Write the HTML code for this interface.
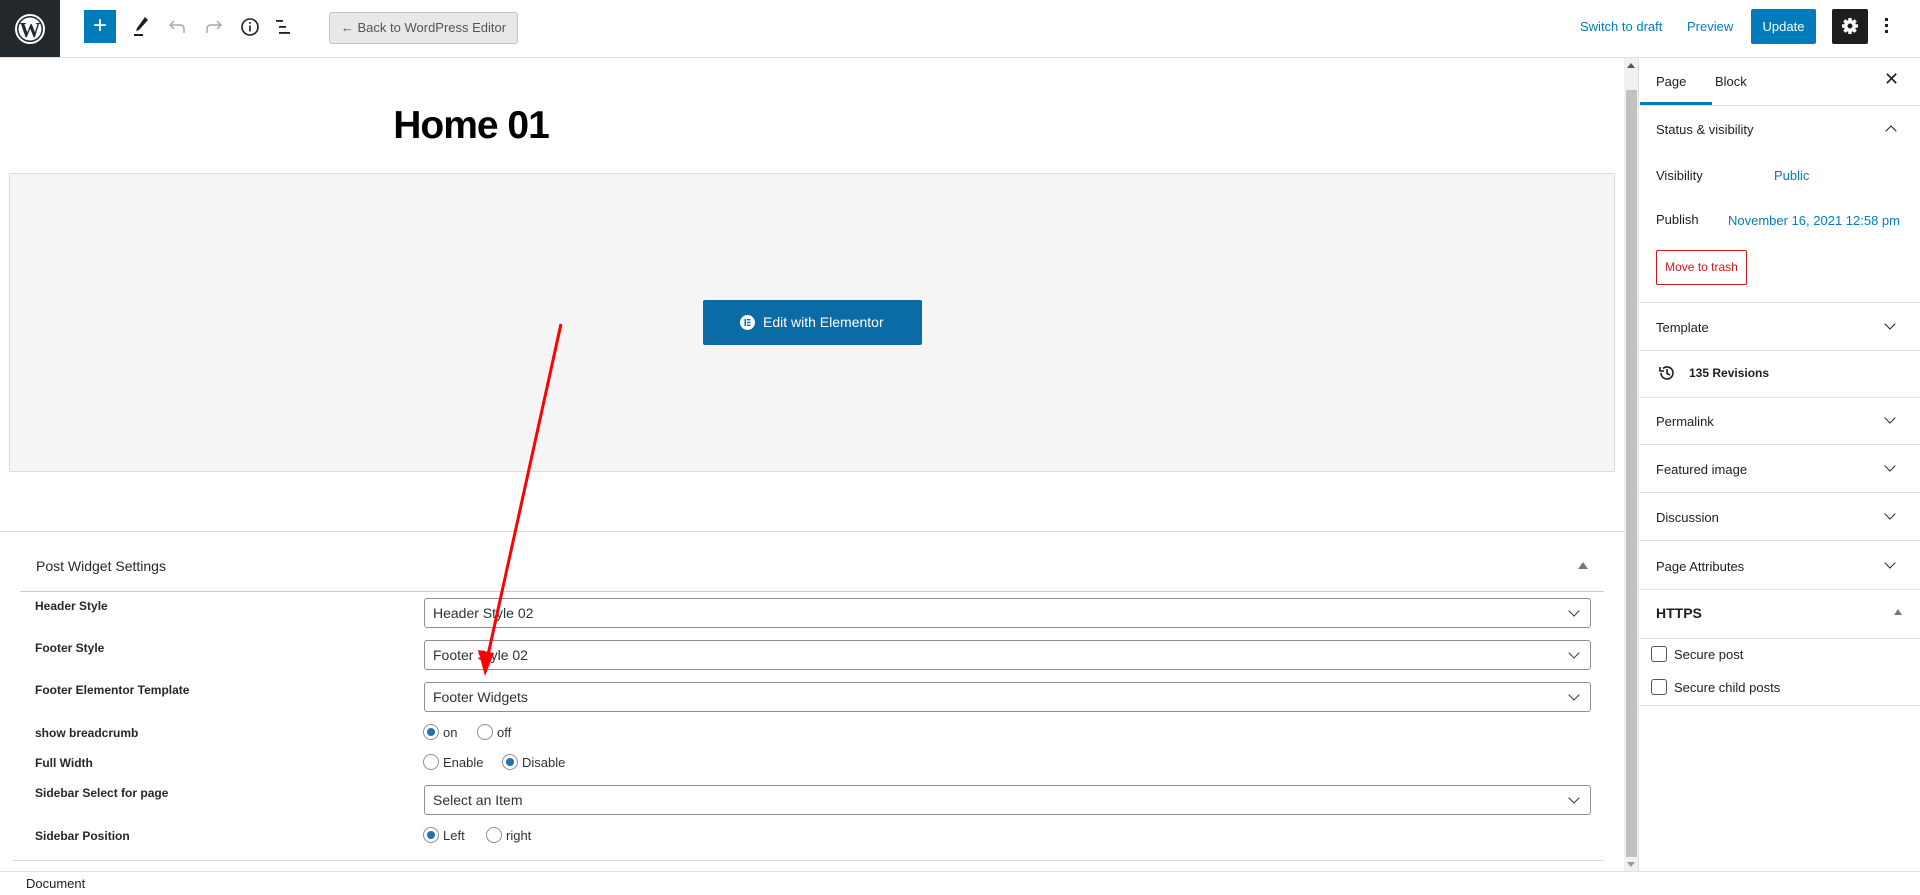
<!DOCTYPE html>
<html><head><meta charset="utf-8"><style>
*{box-sizing:border-box;margin:0;padding:0}
body{width:1920px;height:895px;position:relative;overflow:hidden;background:#fff;font-family:"Liberation Sans",sans-serif;font-size:13px;color:#1e1e1e}
.a{position:absolute}
.t{position:absolute;white-space:nowrap;line-height:16px}
.hl{position:absolute;height:1px;background:#e0e0e0}
.lbl{position:absolute;left:35px;font-weight:bold;font-size:12px;color:#23282d;white-space:nowrap}
.sel{position:absolute;left:424px;width:1167px;height:30px;border:1px solid #8c8f94;border-radius:3px;padding:6px 8px;font-size:14px;color:#2c3338}
.sel:after{content:"";position:absolute;right:12px;top:8px;width:7px;height:7px;border-right:1.5px solid #333;border-bottom:1.5px solid #333;transform:rotate(45deg)}
.rad{position:absolute;width:16px;height:16px;border:1px solid #8c8f94;border-radius:50%}
.rad.on:after{content:"";position:absolute;left:3px;top:3px;width:8px;height:8px;border-radius:50%;background:#2271b1}
.rt{position:absolute;font-size:13px;color:#2c3338}
.side{position:absolute;left:1656px;font-size:13px;color:#1e1e1e}
.chev{position:absolute;left:1886px;width:8px;height:8px;border-right:1.5px solid #1e1e1e;border-bottom:1.5px solid #1e1e1e;transform:rotate(45deg)}
</style></head><body>
<div class="a" style="left:0;top:0;width:60px;height:57px;background:#23282d"></div>
<svg class="a" style="left:14px;top:13px" width="32" height="32" viewBox="0 0 32 32"><circle cx="16" cy="16" r="14" fill="none" stroke="#fff" stroke-width="2"/><circle cx="16" cy="16" r="11.5" fill="#fff"/><text x="16" y="24" text-anchor="middle" font-family="Liberation Serif" font-weight="bold" font-size="21" fill="#23282d">W</text></svg>
<div class="hl" style="left:0;top:57px;width:1920px;background:#e0e0e0"></div>
<div class="a" style="left:84px;top:10px;width:32px;height:33px;background:#007cba;color:#fff;font-size:24px;text-align:center;line-height:31px">+</div>
<svg class="a" style="left:131px;top:14px" width="22" height="24" viewBox="0 0 22 24"><path d="M14 3 L17 6 L8 16 L5 17 L6 14 Z" fill="#1e1e1e"/><rect x="3" y="20" width="9" height="2" fill="#1e1e1e"/></svg>
<svg class="a" style="left:168px;top:17px" width="20" height="20" viewBox="0 0 20 20"><path d="M6 4 L2 8 L6 12 M2 8 H12 Q16 8 16 12 V16" fill="none" stroke="#aaa" stroke-width="1.5"/></svg>
<svg class="a" style="left:203px;top:17px" width="20" height="20" viewBox="0 0 20 20"><path d="M14 4 L18 8 L14 12 M18 8 H8 Q4 8 4 12 V16" fill="none" stroke="#aaa" stroke-width="1.5"/></svg>
<svg class="a" style="left:239px;top:16px" width="22" height="22" viewBox="0 0 22 22"><circle cx="11" cy="11" r="8" fill="none" stroke="#1e1e1e" stroke-width="1.6"/><rect x="10.2" y="9.5" width="1.6" height="6" fill="#1e1e1e"/><rect x="10.2" y="6" width="1.6" height="1.8" fill="#1e1e1e"/></svg>
<svg class="a" style="left:274px;top:17px" width="22" height="20" viewBox="0 0 22 20"><rect x="2" y="3" width="7" height="1.8" fill="#1e1e1e"/><rect x="5" y="9" width="7" height="1.8" fill="#1e1e1e"/><rect x="5" y="15" width="11" height="1.8" fill="#1e1e1e"/></svg>
<div class="a" style="left:329px;top:12px;width:189px;height:32px;background:#e8e8e8;border:1px solid #c4c4c4;border-radius:3px;font-size:13px;color:#555;text-align:center;line-height:30px">← Back to WordPress Editor</div>
<div class="t" style="left:1580px;top:19px;color:#007cba">Switch to draft</div>
<div class="t" style="left:1687px;top:19px;color:#007cba">Preview</div>
<div class="a" style="left:1751px;top:9px;width:65px;height:35px;background:#007cba;color:#fff;border-radius:2px;text-align:center;line-height:35px">Update</div>
<div class="a" style="left:1832px;top:9px;width:36px;height:35px;background:#1e1e1e;border-radius:2px"></div>
<svg class="a" style="left:1840px;top:16px" width="20" height="20" viewBox="0 0 20 20"><g fill="#fff"><circle cx="10" cy="10" r="6"/><rect x="8.3" y="2" width="3.4" height="16"/><rect x="2" y="8.3" width="16" height="3.4"/><rect x="8.3" y="2" width="3.4" height="16" transform="rotate(45 10 10)"/><rect x="8.3" y="2" width="3.4" height="16" transform="rotate(-45 10 10)"/></g><circle cx="10" cy="10" r="2.5" fill="#1e1e1e"/></svg>
<div class="a" style="left:1885px;top:18px;width:3px;height:3px;background:#1e1e1e;box-shadow:0 6px 0 #1e1e1e,0 12px 0 #1e1e1e"></div>

<div class="t" style="left:0;width:942px;text-align:center;top:104px;font-size:39px;line-height:44px;font-weight:bold;color:#000;letter-spacing:-1px">Home 01</div>
<div class="a" style="left:9px;top:173px;width:1606px;height:299px;background:#f5f5f5;border:1px solid #ddd"></div>
<div class="a" style="left:703px;top:300px;width:219px;height:45px;background:#0a6ba6;border-radius:2px;color:#fff;font-size:14px;line-height:45px;padding-left:60px">Edit with Elementor</div>
<svg class="a" style="left:740px;top:315px" width="15" height="15" viewBox="0 0 15 15"><circle cx="7.5" cy="7.5" r="7.5" fill="#fff"/><rect x="4.5" y="4" width="1.5" height="7" fill="#0a6ba6"/><rect x="7" y="4" width="3.5" height="1.4" fill="#0a6ba6"/><rect x="7" y="6.8" width="3.5" height="1.4" fill="#0a6ba6"/><rect x="7" y="9.6" width="3.5" height="1.4" fill="#0a6ba6"/></svg>

<div class="hl" style="left:0;top:531px;width:1624px;background:#ddd"></div>
<div class="t" style="left:36px;top:558px;font-size:14px;color:#23282d">Post Widget Settings</div>
<div class="a" style="left:1578px;top:562px;width:0;height:0;border-left:5px solid transparent;border-right:5px solid transparent;border-bottom:7px solid #777"></div>
<div class="hl" style="left:20px;top:591px;width:1584px;background:#ccc"></div>
<div class="lbl" style="top:599px">Header Style</div>
<div class="sel" style="top:598px">Header Style 02</div>
<div class="lbl" style="top:641px">Footer Style</div>
<div class="sel" style="top:640px">Footer Style 02</div>
<div class="lbl" style="top:683px">Footer Elementor Template</div>
<div class="sel" style="top:682px">Footer Widgets</div>
<div class="lbl" style="top:726px">show breadcrumb</div>
<div class="rad on" style="left:423px;top:724px"></div><div class="rt" style="left:443px;top:725px">on</div>
<div class="rad" style="left:477px;top:724px"></div><div class="rt" style="left:497px;top:725px">off</div>
<div class="lbl" style="top:756px">Full Width</div>
<div class="rad" style="left:423px;top:754px"></div><div class="rt" style="left:443px;top:755px">Enable</div>
<div class="rad on" style="left:502px;top:754px"></div><div class="rt" style="left:522px;top:755px">Disable</div>
<div class="lbl" style="top:786px">Sidebar Select for page</div>
<div class="sel" style="top:785px">Select an Item</div>
<div class="lbl" style="top:829px">Sidebar Position</div>
<div class="rad on" style="left:423px;top:827px"></div><div class="rt" style="left:443px;top:828px">Left</div>
<div class="rad" style="left:486px;top:827px"></div><div class="rt" style="left:506px;top:828px">right</div>
<div class="hl" style="left:13px;top:860px;width:1591px;background:#ddd"></div>

<svg class="a" style="left:0;top:0" width="1624" height="895"><line x1="561" y1="324" x2="488" y2="655" stroke="#f00" stroke-width="3"/><path d="M478 650 L485 676 L494 653 Z" fill="#f00"/></svg>

<div class="a" style="left:1624px;top:58px;width:14px;height:813px;background:#f1f1f1"></div>
<div class="a" style="left:1626px;top:90px;width:11px;height:767px;background:#c1c1c1"></div>
<div class="a" style="left:1627px;top:63px;border-left:4px solid transparent;border-right:4px solid transparent;border-bottom:5px solid #555"></div>
<div class="a" style="left:1627px;top:862px;border-left:4px solid transparent;border-right:4px solid transparent;border-top:5px solid #999"></div>
<div class="hl" style="left:0;top:871px;width:1920px;background:#e0e0e0"></div>
<div class="t" style="left:26px;top:876px;font-size:13px">Document</div>

<div class="a" style="left:1638px;top:58px;width:1px;height:813px;background:#e0e0e0"></div>
<div class="t" style="left:1656px;top:74px">Page</div>
<div class="t" style="left:1715px;top:74px">Block</div>
<div class="a" style="left:1640px;top:102px;width:72px;height:3px;background:#007cba"></div>
<div class="t" style="left:1884px;top:71px;font-size:18px">✕</div>
<div class="hl" style="left:1639px;top:105px;width:281px"></div>
<div class="side" style="top:122px">Status &amp; visibility</div>
<div class="a" style="left:1887px;top:127px;width:8px;height:8px;border-left:1.5px solid #1e1e1e;border-top:1.5px solid #1e1e1e;transform:rotate(45deg)"></div>
<div class="side" style="top:168px">Visibility</div>
<div class="side" style="left:1774px;top:168px;color:#007cba">Public</div>
<div class="side" style="top:212px">Publish</div>
<div class="side" style="left:1728px;top:213px;color:#007cba">November 16, 2021 12:58 pm</div>
<div class="a" style="left:1656px;top:250px;width:91px;height:35px;border:1px solid #cc1818;border-radius:2px;color:#cc1818;font-size:12px;line-height:33px;text-align:center">Move to trash</div>
<div class="hl" style="left:1639px;top:302px;width:281px"></div>
<div class="side" style="top:320px">Template</div><div class="chev" style="top:320px"></div>
<div class="hl" style="left:1639px;top:350px;width:281px"></div>
<svg class="a" style="left:1658px;top:364px" width="18" height="18" viewBox="0 0 18 18"><path d="M3 9 A6 6 0 1 0 5 4.5" fill="none" stroke="#1e1e1e" stroke-width="1.6"/><path d="M2 3 L2 7 L6 7" fill="none" stroke="#1e1e1e" stroke-width="1.6"/><path d="M9 5 V9.5 L12 11" fill="none" stroke="#1e1e1e" stroke-width="1.6"/></svg>
<div class="side" style="left:1689px;top:366px;font-weight:bold;font-size:12px">135 Revisions</div>
<div class="hl" style="left:1639px;top:397px;width:281px"></div>
<div class="side" style="top:414px">Permalink</div><div class="chev" style="top:414px"></div>
<div class="hl" style="left:1639px;top:444px;width:281px"></div>
<div class="side" style="top:462px">Featured image</div><div class="chev" style="top:462px"></div>
<div class="hl" style="left:1639px;top:492px;width:281px"></div>
<div class="side" style="top:510px">Discussion</div><div class="chev" style="top:510px"></div>
<div class="hl" style="left:1639px;top:540px;width:281px"></div>
<div class="side" style="top:559px">Page Attributes</div><div class="chev" style="top:559px"></div>
<div class="hl" style="left:1639px;top:589px;width:281px"></div>
<div class="side" style="top:605px;font-size:14px;font-weight:bold">HTTPS</div>
<div class="a" style="left:1894px;top:609px;border-left:4px solid transparent;border-right:4px solid transparent;border-bottom:6px solid #777"></div>
<div class="hl" style="left:1639px;top:638px;width:281px;background:#ddd"></div>
<div class="a" style="left:1651px;top:646px;width:16px;height:16px;border:1px solid #50575e;border-radius:3px"></div>
<div class="side" style="left:1674px;top:647px">Secure post</div>
<div class="a" style="left:1651px;top:679px;width:16px;height:16px;border:1px solid #50575e;border-radius:3px"></div>
<div class="side" style="left:1674px;top:680px">Secure child posts</div>
<div class="hl" style="left:1639px;top:705px;width:281px;background:#ddd"></div>
</body></html>
